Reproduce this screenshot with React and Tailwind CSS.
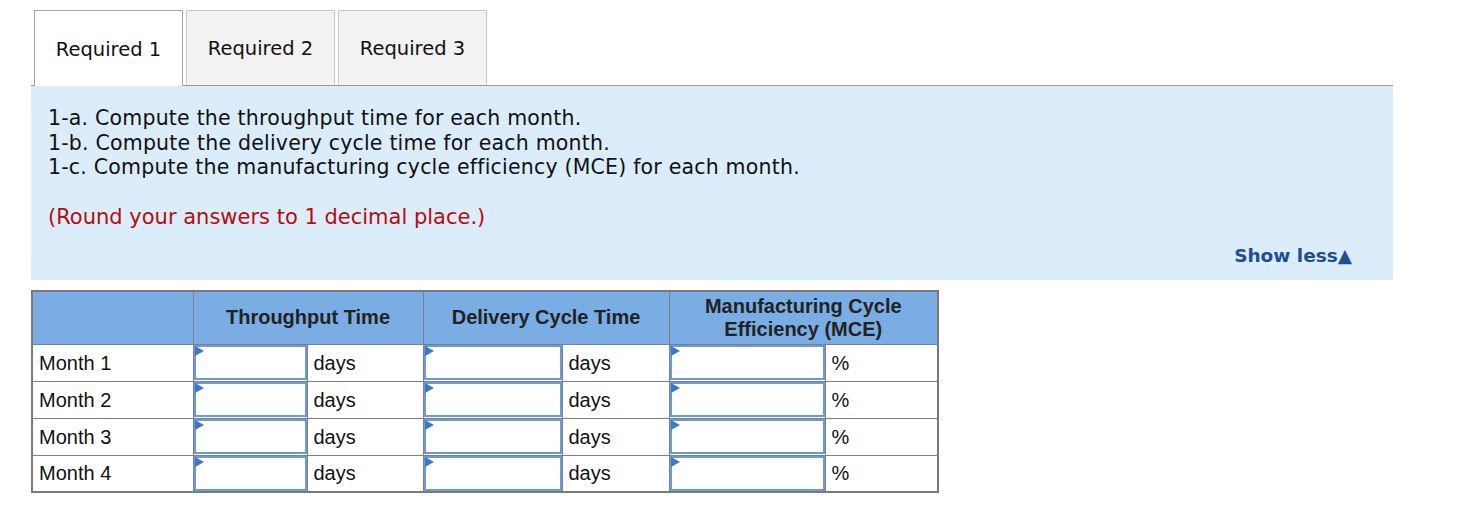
const rows = ['Month 1', 'Month 2', 'Month 3', 'Month 4'];

const Tab = ({ label, active }) => (
  <div
    className={
      active
        ? 'w-[149px] h-[76px] flex items-center justify-center bg-white border border-[#a6a6a6] border-b-0 -mb-px relative z-10'
        : 'w-[149px] h-[75px] flex items-center justify-center bg-[#f2f2f2] border border-[#c8c8c8] border-b-0'
    }
  >
    <span className="text-[19.5px] text-[#111] pt-[2px]">{label}</span>
  </div>
);

const InputCell = () => (
  <td className="border border-[#808080] p-0 h-[37px]">
    <div className="relative h-[35px]">
      <input className="w-full h-full border-2 border-[#6a9bd8] bg-white outline-none px-2" />
      <span className="absolute left-[1px] top-[1px] w-0 h-0 border-y-[5px] border-y-transparent border-l-[9px] border-l-[#3a78c9]" />
    </div>
  </td>
);

const UnitCell = ({ unit }) => (
  <td className="border border-[#808080] px-[6px] text-[20px] text-[#111]">{unit}</td>
);

export default function App() {
  return (
    <div className="bg-white min-h-[506px] pl-[31px] pt-[10px]" style={{ fontFamily: '"DejaVu Sans", Verdana, sans-serif' }}>
      <div className="flex items-end gap-[3px] pl-[3px]">
        <Tab label="Required 1" active />
        <Tab label="Required 2" />
        <Tab label="Required 3" />
      </div>
      <div className="w-[1362px] border-t border-[#9a9a9a]" />
      <div className="w-[1362px] h-[194px] bg-[#dbecfa] pl-[17px] pr-[41px] pt-[20px] flex flex-col">
        <div className="text-[20.5px] leading-[24.5px] tracking-[0.2px] text-[#111]">
          <p>1-a. Compute the throughput time for each month.</p>
          <p>1-b. Compute the delivery cycle time for each month.</p>
          <p>1-c. Compute the manufacturing cycle efficiency (MCE) for each month.</p>
        </div>
        <p className="mt-[25px] text-[21px] leading-[24.5px] text-[#b50d0d]">(Round your answers to 1 decimal place.)</p>
        <div className="mt-auto mb-[10px] flex justify-end">
          <span className="font-bold text-[18.5px] text-[#1d4f91]">Show less▲</span>
        </div>
      </div>
      <table
        className="mt-[10px] border-collapse border-2 border-[#7a7a7a] table-fixed w-[906px]"
        style={{ fontFamily: '"Liberation Sans", Arial, sans-serif' }}
      >
        <colgroup>
          <col className="w-[161px]" />
          <col className="w-[114px]" />
          <col className="w-[116px]" />
          <col className="w-[139px]" />
          <col className="w-[107px]" />
          <col className="w-[156px]" />
          <col className="w-[113px]" />
        </colgroup>
        <thead>
          <tr className="bg-[#7aade3] h-[53px]">
            <th className="border border-[#808080]"></th>
            <th colSpan={2} className="border border-[#808080] text-[20px] font-bold text-[#222] leading-[23px]">Throughput Time</th>
            <th colSpan={2} className="border border-[#808080] text-[20px] font-bold text-[#222] leading-[23px]">Delivery Cycle Time</th>
            <th colSpan={2} className="border border-[#808080] text-[20px] font-bold text-[#222] leading-[23px]">
              Manufacturing Cycle
              <br />
              Efficiency (MCE)
            </th>
          </tr>
        </thead>
        <tbody>
          {rows.map((r) => (
            <tr key={r}>
              <td className="border border-[#808080] px-[6px] text-[20px] text-[#111]">{r}</td>
              <InputCell />
              <UnitCell unit="days" />
              <InputCell />
              <UnitCell unit="days" />
              <InputCell />
              <UnitCell unit="%" />
            </tr>
          ))}
        </tbody>
      </table>
    </div>
  );
}
